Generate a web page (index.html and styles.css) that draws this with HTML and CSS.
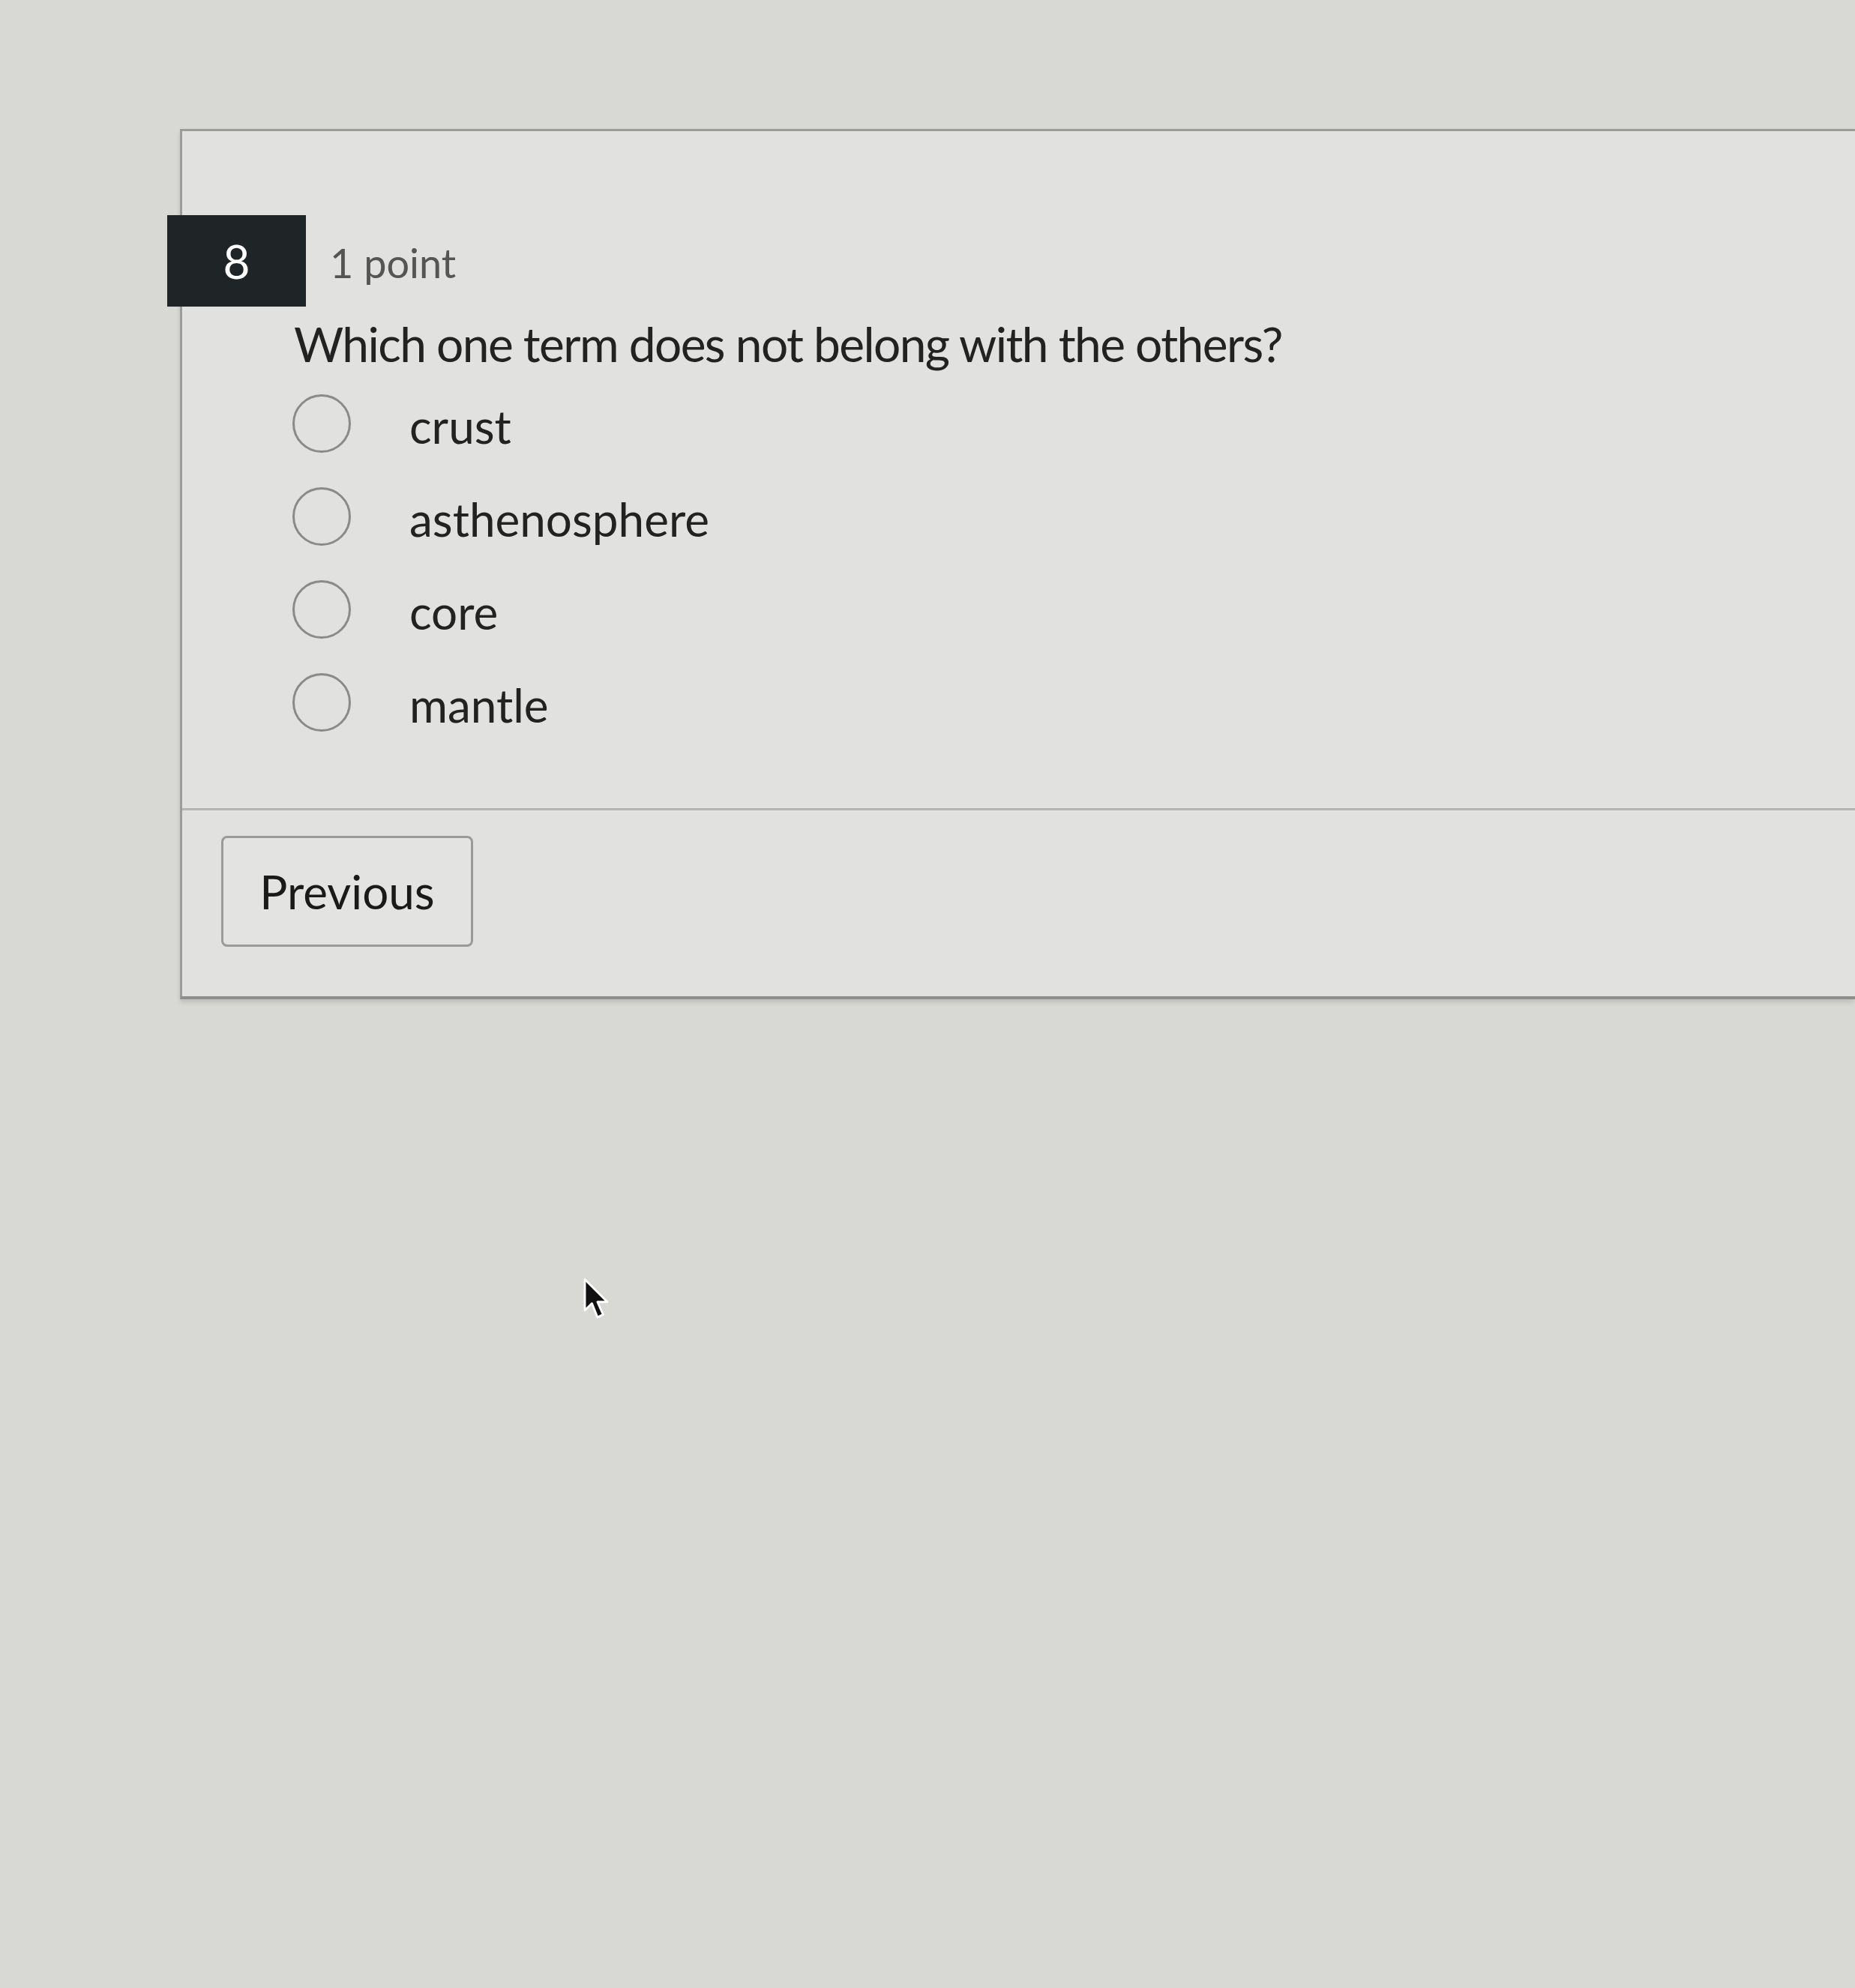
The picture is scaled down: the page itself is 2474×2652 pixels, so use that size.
FILE: index.html
```html
<!DOCTYPE html>
<html lang="en">
<head>
<meta charset="utf-8">
<title>Quiz question 8</title>
<link rel="stylesheet" href="styles.css">
</head>
<body>
<main class="page">
  <section class="card">
    <div class="card-body">
      <div class="q-header">
        <div class="q-number">8</div>
        <div class="q-points">1 point</div>
      </div>
      <h2 class="q-text">Which one term does not belong with the others?</h2>
      <ul class="options">
        <li class="option"><span class="radio"></span><span class="label">crust</span></li>
        <li class="option"><span class="radio"></span><span class="label">asthenosphere</span></li>
        <li class="option"><span class="radio"></span><span class="label">core</span></li>
        <li class="option"><span class="radio"></span><span class="label">mantle</span></li>
      </ul>
    </div>
    <div class="card-footer">
      <button class="btn">Previous</button>
    </div>
  </section>
  <div class="cursor-area">
    <svg class="cursor" viewBox="0 0 20 32" width="38" height="60">
      <path d="M2 2 L2 24 L7 19 L11 29 L15 27 L11 18 L18 18 Z" fill="#111" stroke="#fff" stroke-width="1.5" stroke-linejoin="round"/>
    </svg>
  </div>
</main>
</body>
</html>
```

FILE: styles.css
```css
html, body {
  margin: 0;
  padding: 0;
}
body {
  background: #d8d9d5;
  font-family: Lato, "Open Sans", "Liberation Sans", sans-serif;
  color: #2b2b2b;
  width: 2474px;
  height: 2652px;
  overflow: hidden;
}
.page {
  padding-top: 172px;
}
.card {
  margin-left: 240px;
  background: #e1e2df;
  border: 3px solid #9c9d9b;
  border-right: none;
  border-bottom: 4px solid #8e8f8d;
  box-shadow: 0 4px 6px rgba(0,0,0,0.12);
}
.card-body {
  padding: 112px 0 102px 0;
}
.q-header {
  display: flex;
  align-items: center;
  margin-left: -20px;
}
.q-number {
  width: 185px;
  height: 122px;
  background: #1f2426;
  color: #fff;
  font-size: 62px;
  display: flex;
  align-items: center;
  justify-content: center;
}
.q-points {
  margin-left: 32px;
  font-size: 54px;
  color: #555;
  padding-top: 4px;
}
.q-text {
  margin: 12px 0 0 149px;
  font-size: 64px;
  font-weight: 400;
  letter-spacing: -1.6px;
  color: #222;
  line-height: 1.2;
}
.options {
  list-style: none;
  margin: 28px 0 0 0;
  padding: 0 0 0 147px;
  display: flex;
  flex-direction: column;
  gap: 46px;
}
.option {
  display: flex;
  align-items: center;
  height: 78px;
}
.radio {
  width: 72px;
  height: 72px;
  border: 3px solid #8a8a8a;
  border-radius: 50%;
  flex: none;
}
.label {
  margin-left: 78px;
  font-size: 62px;
  color: #222;
  padding-top: 6px;
}
.card-footer {
  border-top: 3px solid #b5b6b3;
  padding: 34px 0 66px 52px;
}
.btn {
  width: 336px;
  height: 148px;
  background: #e3e4e1;
  border: 3px solid #9a9b99;
  border-radius: 8px;
  font-family: Lato, "Open Sans", "Liberation Sans", sans-serif;
  font-size: 62px;
  color: #1a1a1a;
  padding: 0;
}
.cursor-area {
  padding: 370px 0 0 776px;
}
.cursor {
  display: block;
}
```
